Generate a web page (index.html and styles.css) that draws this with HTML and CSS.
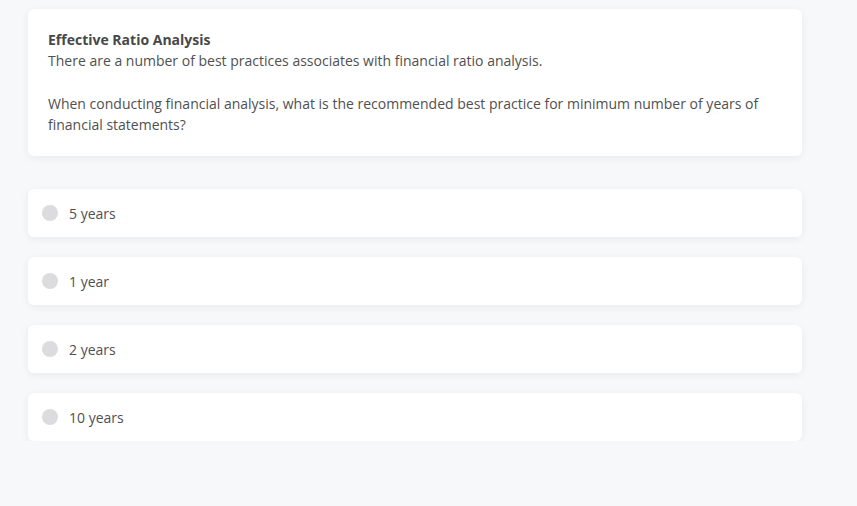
FILE: index.html
```html
<!DOCTYPE html>
<html lang="en">
<head>
    <meta charset="UTF-8">
    <meta name="viewport" content="width=device-width, initial-scale=1.0">
    <title>Effective Ratio Analysis</title>
    <link rel="stylesheet" href="styles.css">
</head>
<body>
    <div class="quiz-container">
        <div class="question-card">
            <h3>Effective Ratio Analysis</h3>
            <p>There are a number of best practices associates with financial ratio analysis.</p>
            <p>When conducting financial analysis, what is the recommended best practice for minimum number of years of financial statements?</p>
        </div>

        <div class="options">
            <label class="option"><span class="radio"></span>5 years</label>
            <label class="option"><span class="radio"></span>1 year</label>
            <label class="option"><span class="radio"></span>2 years</label>
            <label class="option"><span class="radio"></span>10 years</label>
        </div>
    </div>
</body>
</html>
```

FILE: styles.css
```css
body {
    margin: 0;
    background-color: #f7f8fa;
    font-family: "Open Sans", sans-serif;
    font-size: 14px;
    color: #505050;
}

.quiz-container {
    width: 774px;
    padding: 9px 0 0 28px;
}

.question-card {
    background-color: #fff;
    border-radius: 6px;
    padding: 21px 20px 21px;
    box-shadow: 0 2px 8px rgba(0, 0, 0, 0.06);
}

.question-card h3 {
    margin: 0;
    font-size: 14px;
    font-weight: 700;
    line-height: 20px;
    color: #484848;
}

.question-card p {
    margin: 0 0 22px;
    line-height: 21px;
}

.question-card p:last-child {
    margin-bottom: 0;
}

.options {
    display: flex;
    flex-direction: column;
    gap: 20px;
    margin-top: 33px;
}

.option {
    display: flex;
    align-items: center;
    gap: 11px;
    height: 48px;
    padding: 0 14px;
    background-color: #fff;
    border-radius: 6px;
    box-shadow: 0 2px 8px rgba(0, 0, 0, 0.06);
    cursor: pointer;
}

.radio {
    width: 16px;
    height: 16px;
    border-radius: 50%;
    background-color: #dcdcde;
}
```
